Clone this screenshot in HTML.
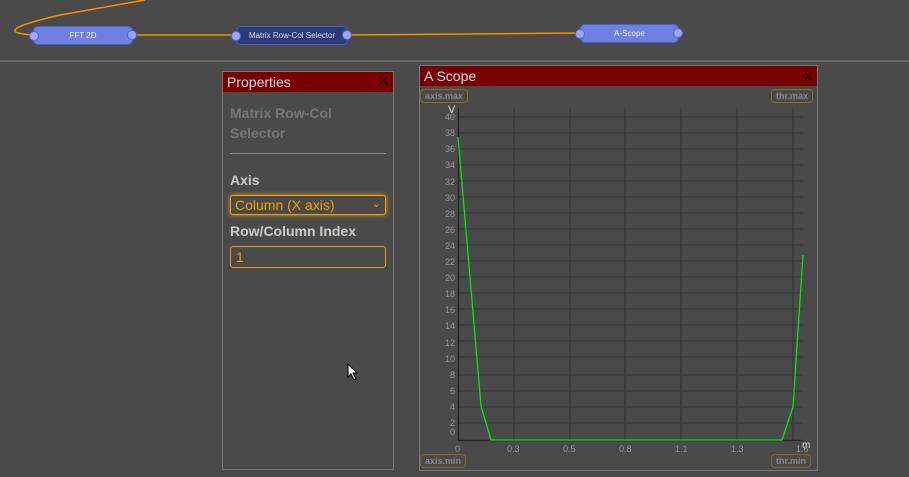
<!DOCTYPE html>
<html><head><meta charset="utf-8"><style>
body{margin:0;width:909px;height:477px;background:#4a4a4a;overflow:hidden;font-family:"Liberation Sans",sans-serif;position:relative}
.abs{position:absolute}
.node{position:absolute;height:17px;border:1px solid #4a5fc8;border-radius:5px;background:#6f80e0;color:#eef;font-size:8px;text-align:center;line-height:17px}
.port{position:absolute;width:8px;height:8px;border-radius:50%;background:#9aa6ff;border:1px solid #5566cc}
.panel{position:absolute;border:1px solid #777;background:#4a4a4a}
.title{background:#760000;color:#ddd;font-size:14px;height:20px;line-height:20px;padding-left:4px;position:relative}
.tag{position:absolute;border:1px solid #8a6a2a;border-radius:4px;font-size:9px;color:#888;font-weight:bold;padding:0 4px;height:12px;line-height:12px}
.yl{position:absolute;font-size:9px;color:#999;text-align:right;width:20px;left:435px}
.xl{position:absolute;font-size:9px;color:#999;top:444px}
</style></head><body>
<div class="abs" style="left:0;top:60px;width:909px;height:2px;background:#666"></div>
<svg class="abs" style="left:0;top:0" width="909" height="477">
<path d="M34,35 C5,33 5,28 60,15 L145,0" stroke="#f39000" stroke-width="1.5" fill="none"/>
<path d="M132,35 L236,35" stroke="#f39000" stroke-width="1.5"/>
<path d="M348,35 L580,33" stroke="#f39000" stroke-width="1.5"/>
</svg>
<div class="node" style="left:33px;top:26px;width:98px">FFT 2D</div>
<div class="port" style="left:29px;top:31px"></div><div class="port" style="left:127px;top:30px"></div>
<div class="node" style="left:236px;top:26px;width:110px;background:#2c3a7a;color:#dde">Matrix Row-Col Selector</div>
<div class="port" style="left:231px;top:31px"></div><div class="port" style="left:342px;top:30px"></div>
<div class="node" style="left:580px;top:24px;width:97px">A-Scope</div>
<div class="port" style="left:575px;top:29px"></div><div class="port" style="left:673px;top:28px"></div>

<div class="panel" style="left:222px;top:71px;width:170px;height:397px">
<div class="title">Properties<span style="position:absolute;right:3px;top:0;color:#3a0000;font-size:15px">✕</span></div>
<div style="padding:0 7px;color:#777;font-weight:bold;font-size:14px;line-height:20px;margin-top:11px">Matrix Row-Col<br>Selector</div>
<div style="margin:10px 7px 0;border-top:1px solid #888"></div>
<div style="padding:0 7px;color:#ccc;font-weight:bold;font-size:14px;margin-top:18px">Axis</div>
<div style="margin:7px 7px 0;height:18px;border:1px solid #f0a000;border-radius:3px;box-shadow:0 0 4px #f0a000;color:#f0a000;font-size:14px;line-height:18px;padding-left:4px;position:relative">Column (X axis)<span style="position:absolute;right:4px;top:-1px;font-size:11px">⌄</span></div>
<div style="padding:0 7px;color:#ccc;font-weight:bold;font-size:14px;margin-top:8px">Row/Column Index</div>
<div style="margin:7px 7px 0;height:20px;border:1px solid #f0a000;border-radius:3px;color:#f0a000;font-size:14px;line-height:20px;padding-left:5px">1</div>
</div>

<div class="panel" style="left:419px;top:65px;width:397px;height:404px">
<div class="title">A Scope<span style="position:absolute;right:3px;top:1px;color:#2a0000;font-size:13px">✕</span></div>
</div>
<div class="tag" style="left:420px;top:89px">axis.max</div>
<div class="tag" style="left:771px;top:89px">thr.max</div>
<div class="tag" style="left:420px;top:454px">axis.min</div>
<div class="tag" style="left:771px;top:454px">thr.min</div>
<svg class="abs" style="left:0;top:0" width="909" height="477">
<g stroke="#333" stroke-width="1">
<path d="M458,117H803M458,133H803M458,149H803M458,165H803M458,181H803M458,197H803M458,213H803M458,229H803M458,245H803M458,261H803M458,277H803M458,293H803M458,309H803M458,325H803M458,341H803M458,357H803M458,375H803M458,391H803M458,407H803M458,423H803"/>
<path d="M514,108V440M570,108V440M625,108V440M681,108V440M737,108V440M793,108V440"/>
</g>
<path d="M458.5,108V440.5H803" stroke="#222" stroke-width="1.2" fill="none"/>
<polyline points="458,137 481,406 491,440 782,440 793,407 803,255" stroke="#00ee00" stroke-width="1.3" fill="none"/>
</svg>
<div class="abs" style="left:448px;top:104px;font-size:11px;color:#ddd">V</div>
<div class="abs" style="left:802px;top:440px;font-size:10px;color:#ddd">m</div>
<div class="yl" style="top:112px">40</div><div class="yl" style="top:128px">38</div><div class="yl" style="top:144px">36</div><div class="yl" style="top:160px">34</div><div class="yl" style="top:177px">32</div><div class="yl" style="top:193px">30</div><div class="yl" style="top:209px">28</div><div class="yl" style="top:225px">26</div><div class="yl" style="top:241px">24</div><div class="yl" style="top:257px">22</div><div class="yl" style="top:273px">20</div><div class="yl" style="top:289px">18</div><div class="yl" style="top:305px">16</div><div class="yl" style="top:321px">14</div><div class="yl" style="top:338px">12</div><div class="yl" style="top:354px">10</div><div class="yl" style="top:370px">8</div><div class="yl" style="top:386px">6</div><div class="yl" style="top:402px">4</div><div class="yl" style="top:418px">2</div><div class="yl" style="top:427px">0</div>
<div class="xl" style="left:455px">0</div><div class="xl" style="left:507px">0.3</div><div class="xl" style="left:563px">0.5</div><div class="xl" style="left:619px">0.8</div><div class="xl" style="left:675px">1.1</div><div class="xl" style="left:731px">1.3</div><div class="xl" style="left:796px">1.6</div>
<svg class="abs" style="left:347px;top:363px" width="12" height="18"><path d="M1,1V14L4,11L7,17L9,16L6,10H10Z" fill="#fff" stroke="#000" stroke-width="1"/></svg>
</body></html>
